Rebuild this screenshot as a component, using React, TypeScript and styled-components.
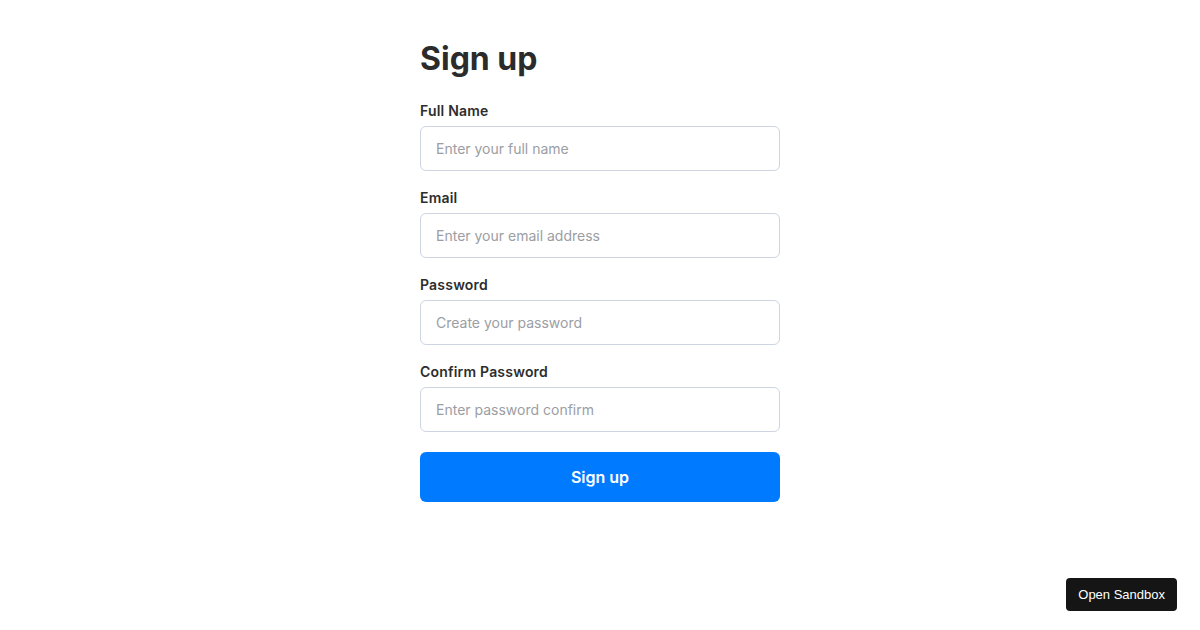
import React from 'react';
import styled, { createGlobalStyle } from 'styled-components';

const GlobalStyle = createGlobalStyle`
  html, body {
    margin: 0;
    padding: 0;
    background: #ffffff;
    font-family: Inter, "Noto Sans", sans-serif;
  }
  * {
    box-sizing: border-box;
  }
`;

const Page = styled.div`
  width: 1200px;
  height: 630px;
  display: flex;
  justify-content: center;
  position: relative;
  overflow: hidden;
`;

const Form = styled.form`
  width: 360px;
  padding-top: 39px;
  display: flex;
  flex-flow: column nowrap;
`;

const Title = styled.h1`
  margin: 0 0 22px 0;
  font-size: 32px;
  line-height: 40px;
  font-weight: 700;
  color: #2b2b2b;
`;

const Field = styled.div`
  display: flex;
  flex-flow: column nowrap;
  margin-bottom: 17px;
`;

const Label = styled.label`
  font-size: 14px;
  line-height: 20px;
  font-weight: 600;
  letter-spacing: 0.2px;
  color: #2d2d2d;
  margin-bottom: 5px;
`;

const Input = styled.input`
  height: 45px;
  width: 100%;
  padding: 0 15px;
  border: 1px solid #cdd5e0;
  border-radius: 6px;
  font-family: Inter, "Noto Sans", sans-serif;
  font-size: 14px;
  color: #2d2d2d;
  outline: none;

  &::placeholder {
    color: #9b9ea3;
  }
`;

const SubmitButton = styled.button`
  margin-top: 3px;
  height: 50px;
  width: 100%;
  border: none;
  border-radius: 6px;
  background: #007bff;
  color: #ffffff;
  font-family: Inter, "Noto Sans", sans-serif;
  font-size: 16px;
  font-weight: 600;
  cursor: pointer;
`;

const SandboxLink = styled.a`
  position: absolute;
  right: 23px;
  bottom: 19px;
  padding: 0 12px;
  height: 33px;
  display: flex;
  align-items: center;
  background: #151515;
  border-radius: 4px;
  color: #ffffff;
  font-family: "Liberation Sans", Arial, sans-serif;
  font-size: 13px;
  text-decoration: none;
`;

const fields = [
  { id: 'fullName', label: 'Full Name', type: 'text', placeholder: 'Enter your full name' },
  { id: 'email', label: 'Email', type: 'email', placeholder: 'Enter your email address' },
  { id: 'password', label: 'Password', type: 'password', placeholder: 'Create your password' },
  { id: 'confirm', label: 'Confirm Password', type: 'password', placeholder: 'Enter password confirm' },
];

const App: React.FC = () => {
  return (
    <>
      <GlobalStyle />
      <Page>
        <Form onSubmit={(e) => e.preventDefault()}>
          <Title>Sign up</Title>
          {fields.map((f) => (
            <Field key={f.id}>
              <Label htmlFor={f.id}>{f.label}</Label>
              <Input id={f.id} type={f.type} placeholder={f.placeholder} />
            </Field>
          ))}
          <SubmitButton type="submit">Sign up</SubmitButton>
        </Form>
        <SandboxLink href="#">Open Sandbox</SandboxLink>
      </Page>
    </>
  );
};

export default App;
